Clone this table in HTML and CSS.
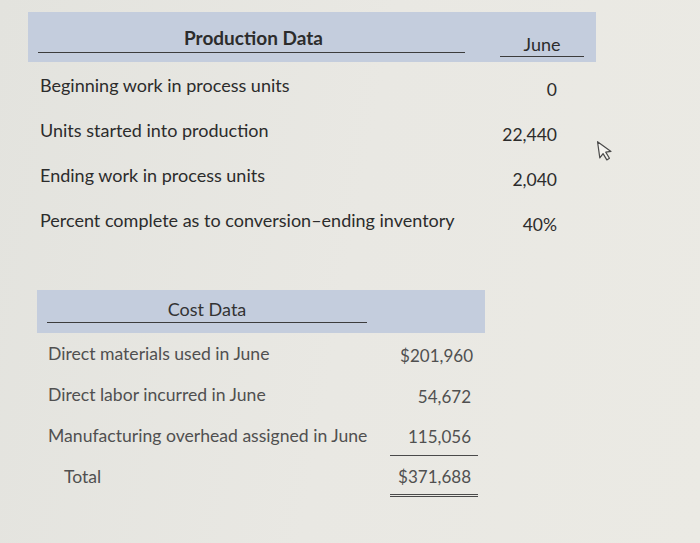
FILE: index.html
```html
<!DOCTYPE html>
<html lang="en">
<head>
    <meta charset="UTF-8">
    <title>Production and Cost Data</title>
    <link rel="stylesheet" href="styles.css">
</head>
<body>
    <div class="page">
        <!-- Production data -->
        <div class="table prod">
            <div class="band">
                <div class="head-label">Production Data</div>
                <div class="head-month">June</div>
            </div>
            <div class="row">
                <div class="label">Beginning work in process units</div>
                <div class="value">0</div>
            </div>
            <div class="row">
                <div class="label">Units started into production</div>
                <div class="value">22,440</div>
            </div>
            <div class="row">
                <div class="label">Ending work in process units</div>
                <div class="value">2,040</div>
            </div>
            <div class="row">
                <div class="label">Percent complete as to conversion&ndash;ending inventory</div>
                <div class="value">40%</div>
            </div>
        </div>

        <!-- Cost data -->
        <div class="table cost">
            <div class="band">
                <div class="head-label">Cost Data</div>
                <div></div>
            </div>
            <div class="row">
                <div class="label">Direct materials used in June</div>
                <div class="value first">$201,960</div>
            </div>
            <div class="row">
                <div class="label">Direct labor incurred in June</div>
                <div class="value">54,672</div>
            </div>
            <div class="row">
                <div class="label">Manufacturing overhead assigned in June</div>
                <div class="value single">115,056</div>
            </div>
            <div class="row">
                <div class="label total">Total</div>
                <div class="value double">$371,688</div>
            </div>
        </div>

        <svg class="cursor" width="18" height="24" viewBox="0 0 16 22">
            <path d="M1.5 1.5 L1.5 16.5 L5 13 L7.6 19.2 L10.2 18 L7.6 12 L12.5 12 Z" fill="#f4f3ef" stroke="#4a4a4a" stroke-width="1.1" stroke-linejoin="round"/>
        </svg>
    </div>
</body>
</html>
```

FILE: styles.css
```css
body {
    margin: 0;
    font-family: Lato, "Open Sans", sans-serif;
    background-color: #e6e5e0;
}

.page {
    position: relative;
    height: 543px;
    overflow: hidden;
    padding-top: 12px;
    box-sizing: border-box;
    background: linear-gradient(100deg, #e3e3de 0%, #e9e8e3 50%, #ebeae4 100%);
}

.table {
    display: grid;
}

.band {
    display: grid;
    background-color: #c4cddd;
}

.row {
    display: grid;
    align-items: center;
}

.label {
    white-space: nowrap;
}

/* production table */
.prod {
    margin-left: 28px;
    width: 568px;
    color: #2c2c2c;
}

.prod .band,
.prod .row {
    grid-template-columns: 427px 84px;
    column-gap: 35px;
    padding: 0 12px 0 10px;
    height: 50px;
    box-sizing: border-box;
}

.prod .row {
    height: 45px;
}

.prod .head-label {
    align-self: start;
    margin-top: 14px;
    padding-left: 146px;
    font-size: 19px;
    font-weight: bold;
    line-height: 24px;
    border-bottom: 1.5px solid #3c3c3c;
    padding-bottom: 2px;
}

.prod .head-month {
    align-self: start;
    margin-top: 21px;
    text-align: center;
    font-size: 18px;
    line-height: 22px;
    border-bottom: 1.5px solid #3c3c3c;
    padding-bottom: 1px;
}

.prod .label {
    font-size: 18px;
    padding-left: 2px;
}

.prod .value {
    font-size: 17.5px;
    text-align: right;
    padding-right: 27px;
    padding-top: 9px;
}

/* cost table */
.cost {
    margin-top: 48px;
    margin-left: 37px;
    width: 448px;
    color: #505050;
}

.cost .band,
.cost .row {
    grid-template-columns: 320px 88px;
    column-gap: 23px;
    padding: 0 7px 0 10px;
}

.cost .band {
    height: 43px;
}

.cost .row {
    height: 41px;
}

.cost .head-label {
    align-self: start;
    margin-top: 8px;
    text-align: center;
    font-size: 18px;
    line-height: 22px;
    color: #333;
    border-bottom: 1.5px solid #3c3c3c;
    padding-bottom: 2px;
}

.cost .label {
    font-size: 17.6px;
    padding-left: 1px;
}

.cost .label.total {
    padding-left: 17px;
}

.cost .value {
    font-size: 17px;
    text-align: right;
    padding-right: 7px;
    align-self: stretch;
    display: flex;
    align-items: center;
    justify-content: flex-end;
    padding-top: 3px;
    box-sizing: border-box;
}

.cost .value.first {
    padding-right: 5px;
}

.cost .value.single {
    border-bottom: 1.5px solid #4a4a4a;
}

.cost .value.double {
    border-bottom: 3px double #4a4a4a;
}

.cursor {
    position: absolute;
    left: 597px;
    top: 139px;
    transform: rotate(-8deg);
}
```
